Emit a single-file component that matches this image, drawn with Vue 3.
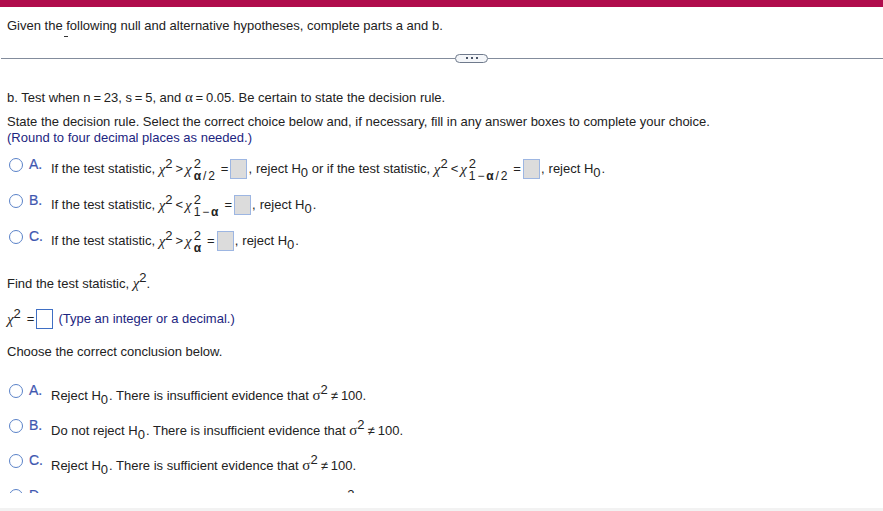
<script setup>
const firstChoices = [
  { key: 'A', parts: [{ sub: 'α / 2', op: '>', tail: 'or' }, { sub: '1 − α / 2', op: '<' }] },
  { key: 'B', parts: [{ sub: '1 − α', op: '<' }] },
  { key: 'C', parts: [{ sub: 'α', op: '>' }] },
]

const conclusions = [
  { key: 'A', lead: 'Reject', rest: 'There is insufficient evidence that' },
  { key: 'B', lead: 'Do not reject', rest: 'There is insufficient evidence that' },
  { key: 'C', lead: 'Reject', rest: 'There is sufficient evidence that' },
  { key: 'D', lead: 'Do not reject', rest: 'There is sufficient evidence that' },
]
</script>

<template>
  <div class="page">
    <div class="topbar"></div>
    <p class="intro">Given the following null and alternative hypotheses, complete parts a and b.</p>
    <div class="divider">
      <span class="divider__line divider__line--left"></span>
      <span class="divider__pill"><i></i><i></i><i></i></span>
      <span class="divider__line"></span>
    </div>

    <div class="scroll">
      <p class="part">b. Test when n<span class="eq">=</span>23, s<span class="eq">=</span>5, and <span class="alpha">α</span><span class="eq">=</span>0.05. Be certain to state the decision rule.</p>
      <p class="state">State the decision rule. Select the correct choice below and, if necessary, fill in any answer boxes to complete your choice.</p>
      <p class="note">(Round to four decimal places as needed.)</p>

      <div class="choices">
        <div v-for="c in firstChoices" :key="c.key" class="choice choice--rule">
          <span class="radio"></span>
          <span class="letter">{{ c.key }}.</span>
          <span class="choice__text">
            <template v-for="(p, i) in c.parts" :key="i">
              <span>{{ i === 0 ? 'If the test statistic,' : 'if the test statistic,' }}&nbsp;</span>
              <span class="chi">χ<sup>2</sup></span>
              <span class="op">{{ p.op }}</span>
              <span class="chi chi--sub">χ<span class="stack"><span>2</span><span class="stack__low"><span v-for="(ch, n) in [...p.sub]" :key="n" :class="{ 'stack__alpha': ch === 'α' }">{{ ch }}</span></span></span></span>
              <span class="op op--eq">=</span>
              <span class="box box--filled"></span>
              <span class="comma">,</span>
              <span>reject H<sub class="zero">0</sub></span>
              <span v-if="p.tail">&nbsp;{{ p.tail }}&nbsp;</span>
            </template>
            <span class="stop">.</span>
          </span>
        </div>
      </div>

      <p class="find">Find the test statistic, <span class="chi">χ<sup>2</sup></span>.</p>
      <p class="answer">
        <span class="chi">χ<sup>2</sup></span>
        <span class="op">=</span>
        <span class="box"></span>
        <span class="hint">(Type an integer or a decimal.)</span>
      </p>
      <p class="choose">Choose the correct conclusion below.</p>

      <div class="conclusions">
        <div v-for="c in conclusions" :key="c.key" class="choice choice--end">
          <span class="radio"></span>
          <span class="letter">{{ c.key }}.</span>
          <span class="choice__text">
            {{ c.lead }} H<sub class="zero">0</sub><span class="stop">.</span> {{ c.rest }}
            <span class="sigma">σ<sup>2</sup></span><span class="ne">≠</span>100.
          </span>
        </div>
      </div>
    </div>
    <div class="spacer"></div>
    <div class="footer"></div>
  </div>
</template>

<style scoped>
.page {
  display: flex;
  flex-direction: column;
  height: 511px;
  overflow: hidden;
  background: #fff;
  color: #222;
  font-family: "Liberation Sans", Arial, sans-serif;
  font-size: 13px;
  line-height: 16px;
}

p {
  margin: 0;
}

.topbar {
  flex: none;
  height: 7px;
  background: #b00c4c;
}

.intro {
  flex: none;
  position: relative;
  margin: 11px 0 0 7px;
}

/* stub of a clipped formula under the first line */
.intro::after {
  content: "";
  position: absolute;
  left: 57px;
  top: 18px;
  width: 4px;
  height: 1px;
  background: #333;
}

.divider {
  flex: none;
  display: flex;
  align-items: center;
  height: 10px;
  margin-top: 19px;
}

.divider__line {
  flex: 1;
  height: 1px;
  background: #838c9c;
}

.divider__line--left {
  flex: none;
  width: 454px;
  margin-left: 1px;
}

.divider__pill {
  display: flex;
  align-items: center;
  justify-content: center;
  gap: 3px;
  box-sizing: border-box;
  width: 33px;
  height: 9px;
  border: 1px solid #6f7a8c;
  border-radius: 5px;
  background: #f4f6f9;
}

.divider__pill i {
  width: 2px;
  height: 2px;
  background: #4a5568;
}

.scroll {
  flex: none;
  height: 430px;
  overflow: hidden;
  padding-left: 7px;
}

.part {
  margin-top: 27px;
}

.eq {
  margin: 0 2.8px;
}

.alpha {
  font-family: "Liberation Serif", serif;
  font-size: 15px;
  line-height: 0;
}

.state {
  margin-top: 8px;
}

.note {
  color: #1c2580;
}

.choices {
  margin-top: 12px;
}

.choice {
  display: flex;
  position: relative;
  padding-left: 44px;
}

.choice--rule {
  height: 36px;
}

.choice--end {
  height: 35px;
}

.radio {
  position: absolute;
  left: 2px;
  top: 0;
  box-sizing: border-box;
  width: 14px;
  height: 14px;
  border: 1.5px solid #5a82c8;
  border-radius: 50%;
}

.choice--end .radio {
  top: -1px;
}

.letter {
  position: absolute;
  left: 22px;
  top: -2px;
  color: #3f57b0;
  font-size: 14px;
  -webkit-text-stroke: 0.2px #3f57b0;
}

.choice--end .letter {
  top: -3px;
}

.choice__text {
  display: flex;
  align-items: center;
  align-self: flex-start;
  height: 22px;
  white-space: pre;
}

.choice--end .choice__text {
  display: block;
  height: auto;
  line-height: 22px;
  margin-top: -1px;
}

.chi {
  font-family: "Liberation Serif", serif;
  font-style: italic;
  font-size: 15px;
}

.chi sup {
  font-family: "Liberation Sans", Arial, sans-serif;
  font-style: normal;
  font-size: 13px;
  line-height: 0;
  vertical-align: 6px;
}

.chi--sub {
  display: inline-flex;
  align-items: center;
}

.stack {
  display: inline-flex;
  flex-direction: column;
  margin: 2px 0 0 2px;
  font-family: "Liberation Sans", Arial, sans-serif;
  font-style: normal;
  font-size: 13px;
  line-height: 12px;
}

.stack__low {
  font-size: 12px;
  white-space: pre;
  word-spacing: -1.5px;
}

.stack__alpha {
  font-weight: 700;
}

.op {
  margin: 0 2px 0 3px;
}

.op--eq {
  margin: 0 2px 0 6px;
}

.comma {
  margin: 0 4px 0 1px;
}

.zero {
  font-size: 13px;
  line-height: 0;
  vertical-align: -4px;
}

.stop {
  margin-left: 1px;
}

.box {
  display: inline-block;
  box-sizing: border-box;
  width: 17px;
  height: 20px;
  border: 1px solid #3f6fc4;
  background: #fff;
}

.box--filled {
  background: #dcdcdc;
  border-color: #9db6e2;
}

.find {
  margin-top: 9px;
}

.answer {
  display: flex;
  align-items: center;
  height: 20px;
  margin-top: 17px;
}

.answer .op {
  margin: 0 2px 0 6px;
}

.hint {
  margin-left: 5px;
  color: #1c2580;
}

.choose {
  margin-top: 15px;
}

.conclusions {
  margin-top: 25px;
}

.sigma {
  font-family: "Liberation Serif", serif;
  font-size: 15px;
}

.sigma sup {
  font-family: "Liberation Sans", Arial, sans-serif;
  font-size: 13px;
  line-height: 0;
  vertical-align: 6px;
}

.ne {
  margin: 0 3px 0 3px;
  font-size: 13px;
  line-height: 0;
}

.spacer {
  flex: 1;
}

.footer {
  flex: none;
  height: 3px;
  background: #f2f2f2;
}
</style>
